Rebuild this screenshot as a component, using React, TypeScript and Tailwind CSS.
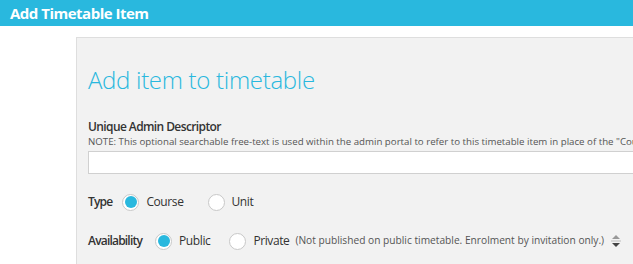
import { useState } from 'react'

function Radio({ checked, label, onClick }: { checked: boolean; label: string; onClick: () => void }) {
  return (
    <label className="flex items-center cursor-pointer" onClick={onClick}>
      <span className="flex h-[17px] w-[17px] items-center justify-center rounded-full border border-[#c8c8c8] bg-white">
        {checked && <span className="h-[12px] w-[12px] rounded-full bg-[#29b8de]" />}
      </span>
      <span className="ml-[7px] text-[12px] tracking-[-0.4px] text-[#333]">{label}</span>
    </label>
  )
}

export default function App() {
  const [type, setType] = useState('course')
  const [avail, setAvail] = useState('public')

  return (
    <div className="h-[264px] w-[633px] overflow-hidden bg-white font-['Open_Sans',sans-serif]">
      <div className="flex h-[26px] items-center bg-[#29b8de] pl-[10px]">
        <h1 className="text-[15px] font-bold leading-none tracking-[-0.5px] text-white">Add Timetable Item</h1>
      </div>

      <div className="ml-[76px] mt-[11px] w-[600px] border border-[#dedede] bg-[#f2f2f2] pl-[11px] pt-[26px] pb-8">
        <h2 className="text-[24px] font-light leading-[32px] tracking-[-0.3px] text-[#29b8de]">Add item to timetable</h2>

        <div className="mt-[23px]">
          <div className="text-[12px] font-semibold leading-[16px] tracking-[-0.6px] text-[#333]">Unique Admin Descriptor</div>
          <div className="whitespace-nowrap text-[9.7px] leading-[14px] text-[#555]">
            NOTE: This optional searchable free-text is used within the admin portal to refer to this timetable item in place of the "Course" name
          </div>
          <input className="h-[23px] w-full border border-[#d0d0d0] bg-white px-2 text-[12px] outline-none" />
        </div>

        <div className="mt-[19px] flex items-center">
          <span className="mr-[10px] text-[12px] font-semibold tracking-[-0.8px] text-[#333]">Type</span>
          <Radio checked={type === 'course'} label="Course" onClick={() => setType('course')} />
          <span className="w-[24px]" />
          <Radio checked={type === 'unit'} label="Unit" onClick={() => setType('unit')} />
        </div>

        <div className="mt-[21px] flex items-center">
          <span className="mr-[13px] text-[12px] font-semibold tracking-[-0.8px] text-[#333]">Availability</span>
          <Radio checked={avail === 'public'} label="Public" onClick={() => setAvail('public')} />
          <span className="w-[19px]" />
          <Radio checked={avail === 'private'} label="Private" onClick={() => setAvail('private')} />
          <span className="ml-[6px] text-[10.2px] text-[#555]">(Not published on public timetable. Enrolment by invitation only.)</span>
          <svg width="12" height="14" viewBox="0 0 12 14" className="ml-[6px]">
            <path d="M6 1 L10 5 L2 5 Z" fill="#999" />
            <rect x="1" y="6.5" width="10" height="1" fill="#bbb" />
            <path d="M2 9 L10 9 L6 13 Z" fill="#444" />
          </svg>
        </div>
      </div>
    </div>
  )
}
